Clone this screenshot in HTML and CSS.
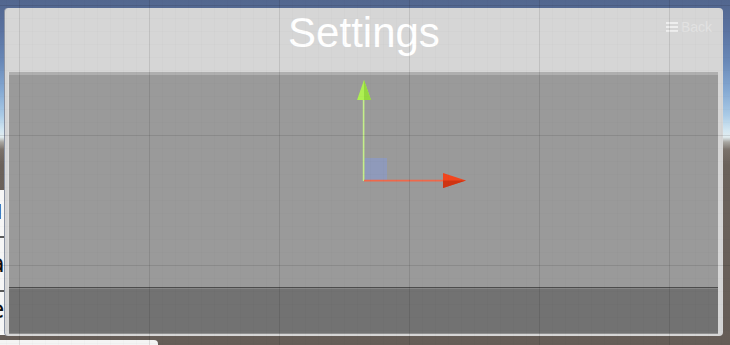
FILE: index.html
```html
<!DOCTYPE html>
<html>
<head>
<meta charset="utf-8">
<link rel="stylesheet" href="styles.css">
</head>
<body>
<div class="stage">
  <div class="scene">
    <div class="side">
      <div class="side-row r1"><span class="glyph">l</span></div>
      <div class="side-row r2"><span class="glyph">a</span></div>
      <div class="side-row r3"><span class="glyph">e</span></div>
    </div>
    <div class="bottom-box"></div>
  </div>

  <div class="panel">
    <div class="header">
      <div class="title">Settings</div>
      <div class="back">
        <span class="burger"><i></i><i></i><i></i></span>
        <span class="back-label">Back</span>
      </div>
    </div>
    <div class="content">
      <svg class="gizmo" width="709" height="211" viewBox="9 75 709 211">
        <rect x="364.5" y="158" width="22.5" height="22" fill="#8f9abb"/>
        <line x1="363.6" y1="98" x2="363.6" y2="181" stroke="#c4f08a" stroke-width="1.6"/>
        <polygon points="357,100 364,80 371,100" fill="#aef052"/>
        <polygon points="364,80 371,100 364,100" fill="#94d840"/>
        <line x1="364" y1="180.6" x2="446" y2="180.6" stroke="#f0684a" stroke-width="1.6"/>
        <polygon points="443,173 466,180.6 443,188" fill="#f2461e"/>
        <polygon points="443,180.6 466,180.6 443,188" fill="#cf3412"/>
      </svg>
    </div>
    <div class="footer"></div>
  </div>

  <div class="grid-overlay"></div>
</div>
</body>
</html>
```

FILE: styles.css
```css
html, body {
  margin: 0;
  padding: 0;
}

body {
  width: 730px;
  height: 345px;
  overflow: hidden;
  font-family: "Liberation Sans", Arial, sans-serif;
}

.stage {
  display: grid;
  grid-template-columns: 730px;
  grid-template-rows: 345px;
  width: 730px;
  height: 345px;
  background: linear-gradient(to bottom,
    #52668e 0px,
    #5a72a0 30px,
    #6887b6 60px,
    #84a8d2 90px,
    #a9cae6 115px,
    #d2e6f1 130px,
    #e2edf0 137px,
    #a9a7a2 142px,
    #7a716a 150px,
    #6b625b 165px,
    #665d57 345px);
}

.stage > * {
  grid-area: 1 / 1;
}

/* background scene items behind the panel */
.scene {
  display: flex;
  flex-direction: column;
  align-self: start;
}

.side {
  margin-top: 190px;
  width: 5px;
  height: 145px;
  background: #f6f6f6;
  overflow: hidden;
  display: flex;
  flex-direction: column;
}

.side-row {
  overflow: hidden;
  color: #111111;
  font-family: "DejaVu Sans", sans-serif;
  line-height: 24px;
  white-space: nowrap;
  -webkit-font-smoothing: antialiased;
}

.r1 {
  height: 46px;
  border-bottom: 2px solid #5a5a5a;
}

.r2 {
  height: 52px;
  border-bottom: 2px solid #5a5a5a;
}

.r3 {
  flex: 1;
}

.glyph {
  display: block;
}

.r1 .glyph { margin-top: 10px; margin-left: -3px; font-size: 19px; }
.r2 .glyph { margin-top: 14px; margin-left: -10px; font-size: 24px; }
.r3 .glyph { margin-top: 6px; margin-left: -11px; font-size: 25px; }

.bottom-box {
  margin-top: 5px;
  width: 158px;
  height: 5px;
  background: #f4f4f4;
  border-top-right-radius: 4px;
}

/* settings panel */
.panel {
  margin: 8px 0 0 4px;
  width: 719px;
  height: 328px;
  box-sizing: border-box;
  background: #d6d6d6;
  border-radius: 4px;
  border-left: 1px solid #8b93a3;
  display: flex;
  flex-direction: column;
  padding: 0 5px 2px 4px;
  align-self: start;
  justify-self: start;
}

.header {
  height: 64px;
  box-sizing: border-box;
  padding-top: 4px;
  display: grid;
  grid-template-columns: 1fr auto 1fr;
  margin: 0 -5px 0 -4px;
  padding-right: 11px;
  padding-left: 11px;
}

.title {
  grid-column: 2;
  color: #ffffff;
  font-size: 42px;
  line-height: 42px;
}

.back {
  grid-column: 3;
  justify-self: end;
  align-self: start;
  display: flex;
  align-items: center;
  gap: 3px;
  margin-top: 8px;
}

.burger {
  display: flex;
  flex-direction: column;
  gap: 2px;
  width: 12px;
}

.burger i {
  display: block;
  height: 2px;
  background: #eeeeee;
}

.back-label {
  color: #e2e2e2;
  font-size: 14px;
  line-height: 14px;
}

.content {
  height: 215px;
  box-sizing: border-box;
  background: #9a9a9a;
  border-top: 3px solid #afafaf;
  box-shadow: -1px 0 0 #dcdcdc;
  overflow: hidden;
}

.gizmo {
  display: block;
}

.footer {
  height: 47px;
  box-sizing: border-box;
  background: #727272;
  border-top: 1px solid #4c4c4c;
  box-shadow: inset 0 1px 0 #858585, inset 0 -1px 0 #8e8e8e;
}

/* scene view grid drawn over everything */
.grid-overlay {
  pointer-events: none;
  background-image:
    linear-gradient(to right, rgba(0,0,0,0.09) 1px, transparent 1px),
    linear-gradient(to bottom, rgba(0,0,0,0.09) 1px, transparent 1px),
    linear-gradient(to right, rgba(0,0,0,0.014) 1px, transparent 1px),
    linear-gradient(to bottom, rgba(0,0,0,0.014) 1px, transparent 1px);
  background-size: 130px 100%, 100% 130px, 13px 100%, 100% 13px;
  background-position: 19px 0, 0 5px, 6px 0, 0 5px;
}
```
